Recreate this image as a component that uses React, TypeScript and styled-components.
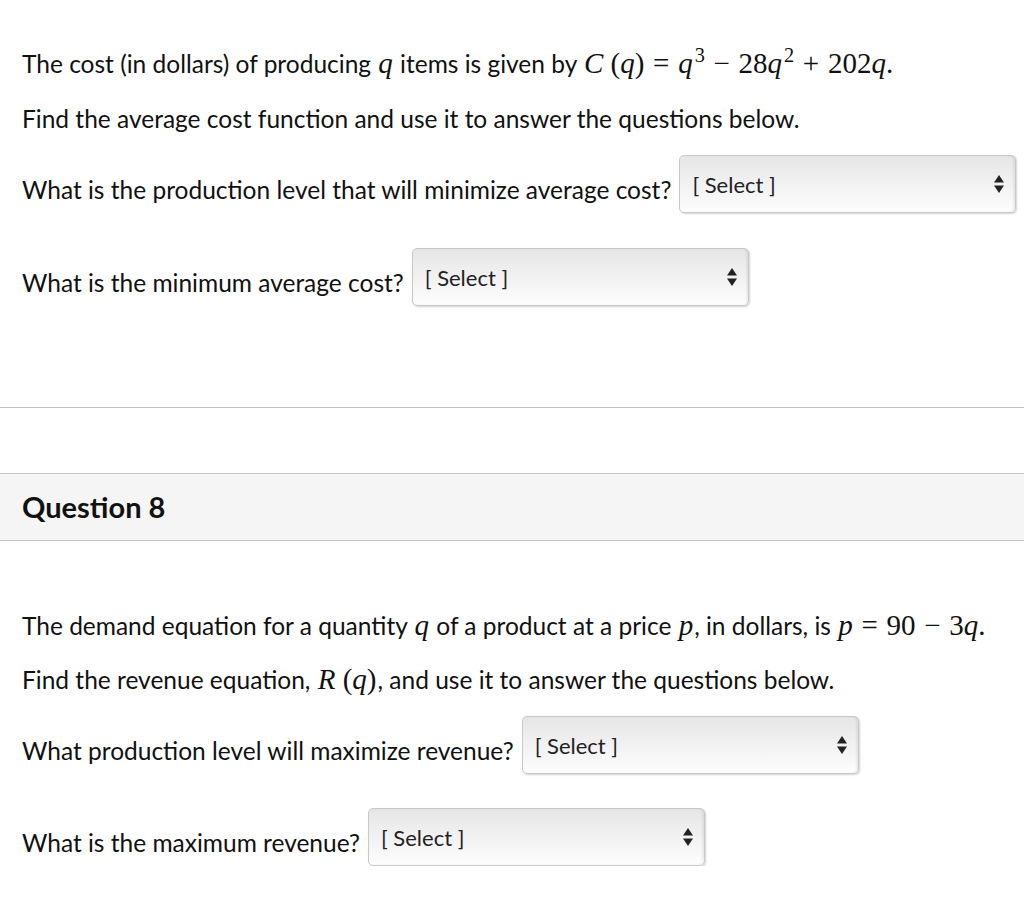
import React from "react";
import styled, { createGlobalStyle } from "styled-components";

const Global = createGlobalStyle`
  html, body { margin: 0; padding: 0; background: #fff; overflow: hidden; }
  body { font-family: Lato, "Noto Sans", sans-serif; color: #111; }
`;

const Page = styled.div`
  width: 1024px;
  padding-top: 47px;
`;

const Content = styled.div`
  padding: 0 22px;
`;

const Para = styled.p<{ $mt?: number }>`
  margin: ${(p) => p.$mt ?? 0}px 0 0 0;
  font-size: 24.5px;
  line-height: 34px;
  white-space: nowrap;
`;

const M = styled.span`
  font-family: "Liberation Serif", "DejaVu Serif", serif;
  font-size: 29px;
  font-style: normal;
  line-height: 0;
  margin: 0 1px;
`;

const V = styled.i`
  font-family: "Liberation Serif", "DejaVu Serif", serif;
  font-style: italic;
`;

const Sup = styled.sup`
  font-size: 0.7em;
  vertical-align: 0;
  position: relative;
  top: -0.55em;
  margin-left: 2px;
`;

const Op = styled.span`
  margin: 0 0.3em;
`;

const Row = styled.div<{ $mt: number }>`
  display: flex;
  align-items: flex-start;
  gap: 8px;
  margin-top: ${(p) => p.$mt}px;
`;

const Label = styled.span`
  font-size: 24.5px;
  line-height: 34px;
  margin-top: 18px;
  white-space: nowrap;
`;

const SelectBox = styled.div`
  box-sizing: border-box;
  flex: 0 0 337px;
  width: 337px;
  height: 58px;
  border: 1px solid #c8c8c8;
  border-radius: 5px;
  background: linear-gradient(#e6e6e6, #fdfdfd);
  box-shadow: 1px 1px 2px rgba(0, 0, 0, 0.18), inset -2px 0 2px rgba(0, 0, 0, 0.06);
  display: flex;
  align-items: center;
  justify-content: space-between;
  padding: 0 11px 0 12px;
  font-size: 22px;
  color: #222;
`;

const Arrows = styled.svg`
  width: 10px;
  height: 18px;
  display: block;
`;

const Rule = styled.hr<{ $mt: number }>`
  margin: ${(p) => p.$mt}px 0 0 0;
  border: 0;
  border-top: 1px solid #c4c4c4;
  height: 0;
`;

const Header = styled.div`
  margin-top: 65px;
  height: 68px;
  background: #f5f5f5;
  border-top: 1px solid #c4c4c4;
  border-bottom: 1px solid #c4c4c4;
  display: flex;
  align-items: center;
  padding: 0 22px 2px;
  box-sizing: border-box;
`;

const Title = styled.h2`
  margin: 0;
  font-size: 29px;
  font-weight: 700;
  color: #111;
`;

const Select = () => (
  <SelectBox>
    <span>[ Select ]</span>
    <Arrows viewBox="0 0 10 18">
      <path d="M5 0 L10 7.5 H0 Z" fill="#222" />
      <path d="M0 10.5 H10 L5 18 Z" fill="#222" />
    </Arrows>
  </SelectBox>
);

export default function App() {
  return (
    <Page>
      <Global />
      <Content>
        <Para>
          The cost (in dollars) of producing <M><V>q</V></M> items is given by{" "}
          <M>
            <V>C</V> (<V>q</V>)<Op>=</Op><V>q</V>
            <Sup>3</Sup>
            <Op>−</Op>28<V>q</V>
            <Sup>2</Sup>
            <Op>+</Op>202<V>q</V>.
          </M>
        </Para>
        <Para $mt={21}>Find the average cost function and use it to answer the questions below.</Para>
        <Row $mt={19}>
          <Label>What is the production level that will minimize average cost?</Label>
          <Select />
        </Row>
        <Row $mt={35}>
          <Label>What is the minimum average cost?</Label>
          <Select />
        </Row>
      </Content>
      <Rule $mt={101} />
      <Header>
        <Title>Question 8</Title>
      </Header>
      <Content>
        <Para $mt={68}>
          The demand equation for a quantity <M><V>q</V></M> of a product at a price <M><V>p</V></M>, in
          dollars, is{" "}
          <M>
            <V>p</V>
            <Op>=</Op>90<Op>−</Op>3<V>q</V>.
          </M>
        </Para>
        <Para $mt={20}>
          Find the revenue equation, <M><V>R</V> (<V>q</V>)</M>, and use it to answer the questions below.
        </Para>
        <Row $mt={19}>
          <Label>What production level will maximize revenue?</Label>
          <Select />
        </Row>
        <Row $mt={34}>
          <Label>What is the maximum revenue?</Label>
          <Select />
        </Row>
      </Content>
    </Page>
  );
}
